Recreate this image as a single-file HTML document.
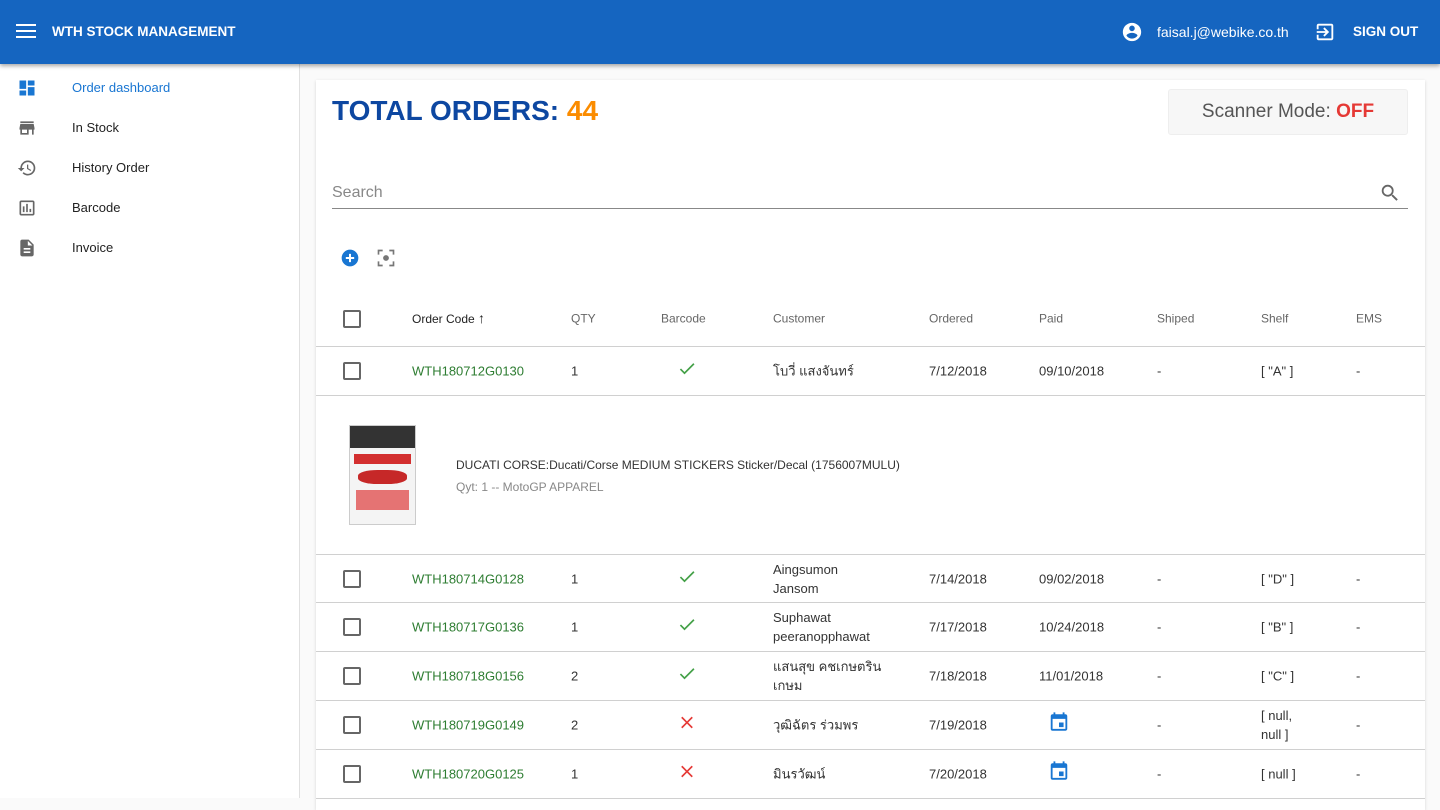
<!DOCTYPE html>
<html><head><meta charset="utf-8">
<style>
*{box-sizing:border-box;margin:0;padding:0}
body{width:1440px;height:798px;overflow:hidden;background:#fafafa;font-family:"Liberation Sans","DejaVu Sans",sans-serif;font-size:13px;color:#333;position:relative}
.hdr{position:absolute;left:0;top:0;width:1440px;height:64px;background:#1565c0;box-shadow:0 2px 4px rgba(0,0,0,.35);z-index:5;color:#fff}
.a{position:absolute}
.side{position:absolute;left:0;top:64px;width:300px;height:734px;background:#fff;border-right:1px solid #e0e0e0}
.nav{position:absolute;left:72px;font-size:13px;color:#222}
.card{position:absolute;left:316px;top:80px;width:1109px;height:730px;background:#fff;box-shadow:0 1px 3px rgba(0,0,0,.15)}
.row{position:absolute;left:0;width:1109px;border-bottom:1px solid #d0d0d0}
.row>div{position:absolute;top:50%;transform:translateY(-50%);line-height:19px}
.cb{width:18px;height:18px;border:2px solid #666;border-radius:2px;left:27px}
.code{left:96px;color:#2e7d32}
.th{color:#666;font-size:12px}
</style></head><body>
<div class="hdr">
<svg class="a" style="left:16px;top:23px" width="20" height="16" viewBox="0 0 20 16"><rect y="1" width="20" height="2" fill="#fff"/><rect y="7" width="20" height="2" fill="#fff"/><rect y="13" width="20" height="2" fill="#fff"/></svg>
<div class="a" style="left:52px;top:24px;font-weight:bold;font-size:13.5px">WTH STOCK MANAGEMENT</div>
<svg class="a" style="left:1121px;top:21px" width="22" height="22" viewBox="0 0 24 24"><path fill="#fff" d="M12 2C6.48 2 2 6.48 2 12s4.48 10 10 10 10-4.48 10-10S17.52 2 12 2zm0 3c1.66 0 3 1.34 3 3s-1.34 3-3 3-3-1.34-3-3 1.34-3 3-3zm0 14.2c-2.5 0-4.71-1.28-6-3.22.03-1.990 4-3.08 6-3.08 1.99 0 5.97 1.09 6 3.08-1.29 1.94-3.5 3.22-6 3.22z"/></svg>
<div class="a" style="left:1157px;top:24px;font-size:14px">faisal.j@webike.co.th</div>
<svg class="a" style="left:1314px;top:21px" width="22" height="22" viewBox="0 0 24 24"><path fill="#fff" d="M10.09 15.59L11.5 17l5-5-5-5-1.41 1.41L12.67 11H3v2h9.67l-2.58 2.59zM19 3H5c-1.11 0-2 .9-2 2v4h2V5h14v14H5v-4H3v4c0 1.1.89 2 2 2h14c1.1 0 2-.9 2-2V5c0-1.1-.9-2-2-2z"/></svg>
<div class="a" style="left:1353px;top:24px;font-size:13.5px;font-weight:bold">SIGN OUT</div>
</div>
<div class="side">
<svg class="a" style="left:17px;top:14px" width="20" height="20" viewBox="0 0 24 24"><path fill="#1976d2" d="M3 13h8V3H3v10zm0 8h8v-6H3v6zm10 0h8V11h-8v10zm0-18v6h8V3h-8z"/></svg>
<div class="nav" style="top:16px;color:#1976d2">Order dashboard</div>
<svg class="a" style="left:17px;top:54px" width="20" height="20" viewBox="0 0 24 24"><path fill="#666" d="M20 4H4v2h16V4zm1 10v-2l-1-5H4l-1 5v2h1v6h10v-6h4v6h2v-6h1zm-9 4H6v-4h6v4z"/></svg>
<div class="nav" style="top:56px">In Stock</div>
<svg class="a" style="left:17px;top:94px" width="20" height="20" viewBox="0 0 24 24"><path fill="#666" d="M13 3a9 9 0 0 0-9 9H1l3.89 3.89.07.14L9 12H6c0-3.87 3.13-7 7-7s7 3.130 7 7-3.13 7-7 7c-1.93 0-3.68-.79-4.94-2.06l-1.42 1.42A8.954 8.954 0 0 0 13 21a9 9 0 0 0 0-18zm-1 5v5l4.28 2.54.72-1.21-3.5-2.08V8H12z"/></svg>
<div class="nav" style="top:96px">History Order</div>
<svg class="a" style="left:17px;top:134px" width="20" height="20" viewBox="0 0 24 24"><path fill="#666" d="M19 3H5c-1.1 0-2 .9-2 2v14c0 1.1.9 2 2 2h14c1.1 0 2-.9 2-2V5c0-1.1-.9-2-2-2zm0 16H5V5h14v14zM7 10h2v7H7zm4-3h2v10h-2zm4 6h2v4h-2z"/></svg>
<div class="nav" style="top:136px">Barcode</div>
<svg class="a" style="left:17px;top:174px" width="20" height="20" viewBox="0 0 24 24"><path fill="#666" d="M14 2H6c-1.1 0-2 .9-2 2v16c0 1.1.9 2 2 2h12c1.1 0 2-.9 2-2V8l-6-6zm2 16H8v-2h8v2zm0-4H8v-2h8v2zm-3-5V3.5L18.5 9H13z"/></svg>
<div class="nav" style="top:176px">Invoice</div>
</div>
<div class="card">
<div class="a" style="left:16px;top:15px;font-size:28px;font-weight:bold;color:#0d47a1">TOTAL ORDERS: <span style="color:#fb8c00">44</span></div>
<div class="a" style="left:852px;top:9px;width:240px;height:46px;background:#f7f7f7;border:1px solid #eee;border-radius:3px;text-align:center;line-height:44px;font-size:19px;color:#555">Scanner Mode: <span style="color:#e53935;font-weight:bold">OFF</span></div>
<div class="a" style="left:16px;top:104px;font-size:16px;color:#888">Search</div>
<svg class="a" style="left:1063px;top:102px" width="22" height="22" viewBox="0 0 24 24"><path fill="#666" d="M15.5 14h-.79l-.28-.27A6.471 6.471 0 0 0 16 9.5 6.5 6.5 0 1 0 9.5 16c1.61 0 3.09-.59 4.23-1.57l.27.28v.79l5 4.99L20.49 19l-4.99-5zm-6 0C7.01 14 5 11.99 5 9.5S7.01 5 9.5 5 14 7.01 14 9.5 11.99 14 9.5 14z"/></svg>
<div class="a" style="left:16px;top:128px;width:1076px;height:1px;background:#888"></div>
<svg class="a" style="left:24px;top:168px" width="20" height="20" viewBox="0 0 24 24"><circle cx="12" cy="12" r="10" fill="#1976d2"/><path d="M12 7v10M7 12h10" stroke="#fff" stroke-width="2.4"/></svg>
<svg class="a" style="left:60px;top:168px" width="20" height="20" viewBox="0 0 24 24"><path fill="none" stroke="#777" stroke-width="2" d="M3 8V3h5M16 3h5v5M21 16v5h-5M8 21H3v-5"/><circle cx="12" cy="12" r="3.5" fill="#777"/></svg>

<div class="row" style="top:215px;height:52px">
<div class="cb" style="margin-top:-2px"></div><div style="left:96px;color:#222;font-size:12px;margin-top:-2px">Order Code <span style="font-size:14px">↑</span></div>
<div class="th" style="left:255px;margin-top:-2px">QTY</div><div class="th" style="left:345px;margin-top:-2px">Barcode</div><div class="th" style="left:457px;margin-top:-2px">Customer</div><div class="th" style="left:613px;margin-top:-2px">Ordered</div><div class="th" style="left:723px;margin-top:-2px">Paid</div><div class="th" style="left:841px;margin-top:-2px">Shiped</div><div class="th" style="left:945px;margin-top:-2px">Shelf</div><div class="th" style="left:1040px;margin-top:-2px">EMS</div>
</div>
<div class="row" style="top:267px;height:49px">
<div class="cb"></div><div class="code">WTH180712G0130</div><div style="left:255px">1</div>
<div style="left:361px"><svg width="20" height="20" viewBox="0 0 24 24"><path fill="#43a047" d="M9 16.17L4.83 12l-1.42 1.41L9 19 21 7l-1.41-1.41z"/></svg></div>
<div style="left:457px">โบวี่ แสงจันทร์</div><div style="left:613px">7/12/2018</div><div style="left:723px">09/10/2018</div><div style="left:841px">-</div><div style="left:945px">[ "A" ]</div><div style="left:1040px">-</div>
</div>
<div class="row" style="top:316px;height:159px">
<div style="left:33px;top:79px;width:67px;height:100px;background:#f4f4f4;border:1px solid #ccc">
<div style="height:22px;background:#333"></div>
<div style="margin:6px 4px;height:10px;background:#d32f2f"></div>
<div style="margin:6px 8px;height:14px;background:#c62828;border-radius:40%"></div>
<div style="margin:6px 6px;height:20px;background:#e57373"></div>
</div>
<div style="left:140px;transform:none;top:60px;color:#333;font-size:12px">DUCATI CORSE:Ducati/Corse MEDIUM STICKERS Sticker/Decal (1756007MULU)</div>
<div style="left:140px;top:82px;transform:none;color:#888;font-size:12px">Qyt: 1 -- MotoGP APPAREL</div>
</div>
<div class="row" style="top:475px;height:48px">
<div class="cb"></div><div class="code">WTH180714G0128</div><div style="left:255px">1</div>
<div style="left:361px"><svg width="20" height="20" viewBox="0 0 24 24"><path fill="#43a047" d="M9 16.17L4.83 12l-1.42 1.41L9 19 21 7l-1.41-1.41z"/></svg></div>
<div style="left:457px">Aingsumon<br>Jansom</div><div style="left:613px">7/14/2018</div><div style="left:723px">09/02/2018</div><div style="left:841px">-</div><div style="left:945px">[ "D" ]</div><div style="left:1040px">-</div>
</div>
<div class="row" style="top:523px;height:49px">
<div class="cb"></div><div class="code">WTH180717G0136</div><div style="left:255px">1</div>
<div style="left:361px"><svg width="20" height="20" viewBox="0 0 24 24"><path fill="#43a047" d="M9 16.17L4.83 12l-1.42 1.41L9 19 21 7l-1.41-1.41z"/></svg></div>
<div style="left:457px">Suphawat<br>peeranopphawat</div><div style="left:613px">7/17/2018</div><div style="left:723px">10/24/2018</div><div style="left:841px">-</div><div style="left:945px">[ "B" ]</div><div style="left:1040px">-</div>
</div>
<div class="row" style="top:572px;height:49px">
<div class="cb"></div><div class="code">WTH180718G0156</div><div style="left:255px">2</div>
<div style="left:361px"><svg width="20" height="20" viewBox="0 0 24 24"><path fill="#43a047" d="M9 16.17L4.83 12l-1.42 1.41L9 19 21 7l-1.41-1.41z"/></svg></div>
<div style="left:457px">แสนสุข คชเกษตริน<br>เกษม</div><div style="left:613px">7/18/2018</div><div style="left:723px">11/01/2018</div><div style="left:841px">-</div><div style="left:945px">[ "C" ]</div><div style="left:1040px">-</div>
</div>
<div class="row" style="top:621px;height:49px">
<div class="cb"></div><div class="code">WTH180719G0149</div><div style="left:255px">2</div>
<div style="left:361px"><svg width="20" height="20" viewBox="0 0 24 24"><path fill="#e53935" d="M19 6.41L17.59 5 12 10.59 6.41 5 5 6.41 10.59 12 5 17.59 6.41 19 12 13.41 17.59 19 19 17.59 13.41 12z"/></svg></div>
<div style="left:457px">วุฒิฉัตร ร่วมพร</div><div style="left:613px">7/19/2018</div>
<div style="left:732px"><svg width="22" height="22" viewBox="0 0 24 24"><path fill="#1976d2" d="M17 12h-5v5h5v-5zM16 1v2H8V1H6v2H5c-1.11 0-2 .9-2 2v14a2 2 0 0 0 2 2h14c1.1 0 2-.9 2-2V5c0-1.1-.9-2-2-2h-1V1h-2zm3 18H5V8h14v11z"/></svg></div>
<div style="left:841px">-</div><div style="left:945px">[ null,<br>null ]</div><div style="left:1040px">-</div>
</div>
<div class="row" style="top:670px;height:49px">
<div class="cb"></div><div class="code">WTH180720G0125</div><div style="left:255px">1</div>
<div style="left:361px"><svg width="20" height="20" viewBox="0 0 24 24"><path fill="#e53935" d="M19 6.41L17.59 5 12 10.59 6.41 5 5 6.41 10.59 12 5 17.59 6.41 19 12 13.41 17.59 19 19 17.59 13.41 12z"/></svg></div>
<div style="left:457px">มินรวัฒน์</div><div style="left:613px">7/20/2018</div>
<div style="left:732px"><svg width="22" height="22" viewBox="0 0 24 24"><path fill="#1976d2" d="M17 12h-5v5h5v-5zM16 1v2H8V1H6v2H5c-1.11 0-2 .9-2 2v14a2 2 0 0 0 2 2h14c1.1 0 2-.9 2-2V5c0-1.1-.9-2-2-2h-1V1h-2zm3 18H5V8h14v11z"/></svg></div>
<div style="left:841px">-</div><div style="left:945px">[ null ]</div><div style="left:1040px">-</div>
</div>
</div>
</body></html>
